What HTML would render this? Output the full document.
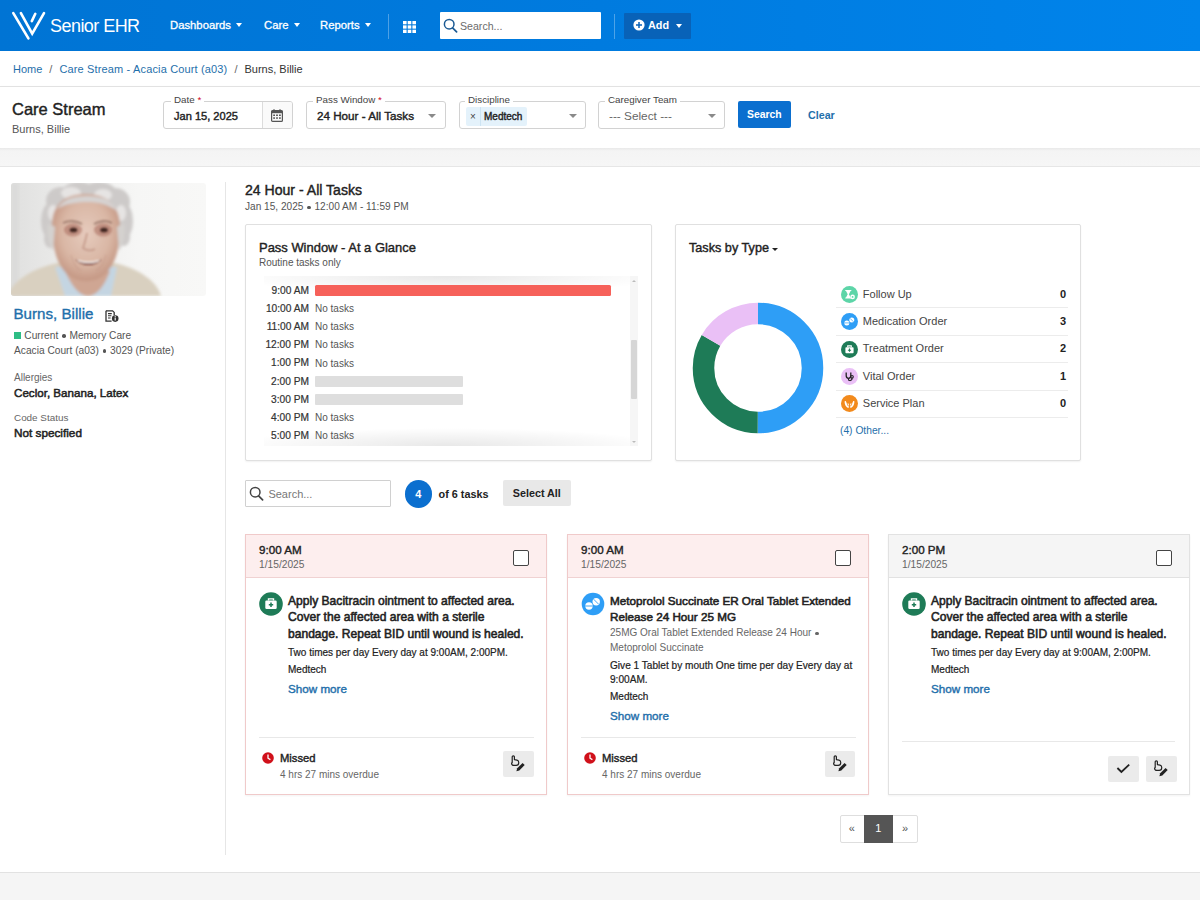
<!DOCTYPE html>
<html><head><meta charset="utf-8">
<style>
*{box-sizing:border-box;margin:0;padding:0}
html,body{width:1200px;height:900px;overflow:hidden;background:#fff;font-family:"Liberation Sans",sans-serif;color:#222}
.abs{position:absolute}
.t{position:absolute;line-height:1;white-space:nowrap}
.b{font-weight:bold}
.caret{display:inline-block;width:0;height:0;border-left:3.5px solid transparent;border-right:3.5px solid transparent;border-top:4px solid currentColor;vertical-align:middle;margin-left:5px;margin-top:-2px}
.fld{position:absolute;border:1px solid #d2d2d2;border-radius:3px;background:#fff}
.flbl{position:absolute;line-height:1;font-size:9.8px;color:#444;background:#fff;padding:0 3px;white-space:nowrap}
.req{color:#d0021b}
.tri{position:absolute;width:0;height:0;border-left:4px solid transparent;border-right:4px solid transparent;border-top:4.5px solid #8a8a8a}
.link{color:#1f6fab}
.card{position:absolute;border:1px solid #f0cccc;background:#fff;border-radius:2px}
.card .hd{position:absolute;left:0;top:0;right:0;height:44px;background:#fdeeee;border-bottom:1px solid #f0d4d4}
.chk{position:absolute;width:16px;height:16px;border:1.8px solid #444;border-radius:2px;background:#fff}
.abtn{position:absolute;width:31px;height:27px;background:#ebebeb;border-radius:2px}
.dot{display:inline-block;width:3.5px;height:3.5px;border-radius:50%;background:currentColor;vertical-align:middle;margin:0 1px}
.sb{-webkit-text-stroke:0.4px currentColor}
.sbw{-webkit-text-stroke:0.3px #fff}
</style></head><body>

<!-- HEADER -->
<div class="abs" style="left:0;top:0;width:1200px;height:51px;background:linear-gradient(90deg,#0074d4 0%,#007bdf 50%,#0084eb 100%)"></div>
<svg class="abs" style="left:11px;top:11px" width="36" height="30" viewBox="0 0 36 30">
  <g stroke="#fff" stroke-width="2.6" fill="none" stroke-linecap="round">
  <path d="M2.3 2.1 L17.4 27.4"/>
  <path d="M9.9 2.1 L21.2 22.6 L33 2.1"/>
  <path d="M20.8 10.1 L24.3 2.8"/>
  </g>
</svg>
<div class="t" style="left:50px;top:17px;color:#fff;font-size:18px;letter-spacing:-0.55px">Senior EHR</div>
<div class="t" style="left:170px;top:20px;color:#fff;font-size:11.3px;-webkit-text-stroke:0.3px #fff">Dashboards<span class="caret"></span></div>
<div class="t" style="left:264px;top:20px;color:#fff;font-size:11.3px;-webkit-text-stroke:0.3px #fff">Care<span class="caret"></span></div>
<div class="t" style="left:320px;top:20px;color:#fff;font-size:11.3px;-webkit-text-stroke:0.3px #fff">Reports<span class="caret"></span></div>
<div class="abs" style="left:388px;top:14px;width:1px;height:25px;background:rgba(255,255,255,.3)"></div>
<svg class="abs" style="left:403px;top:21px" width="13" height="12" viewBox="0 0 13 12" fill="#fff">
  <rect x="0" y="0" width="3.6" height="3.3"/><rect x="4.7" y="0" width="3.6" height="3.3"/><rect x="9.4" y="0" width="3.6" height="3.3"/>
  <rect x="0" y="4.35" width="3.6" height="3.3"/><rect x="4.7" y="4.35" width="3.6" height="3.3"/><rect x="9.4" y="4.35" width="3.6" height="3.3"/>
  <rect x="0" y="8.7" width="3.6" height="3.3"/><rect x="4.7" y="8.7" width="3.6" height="3.3"/><rect x="9.4" y="8.7" width="3.6" height="3.3"/>
</svg>
<div class="abs" style="left:440px;top:12px;width:161px;height:27px;background:#fff;border-radius:1px"></div>
<svg class="abs" style="left:443px;top:18px" width="15" height="15" viewBox="0 0 15 15"><circle cx="6.2" cy="6.2" r="4.8" stroke="#1b5a94" stroke-width="1.5" fill="none"/><path d="M9.6 9.8 L13.6 13.8" stroke="#1b5a94" stroke-width="1.7" stroke-linecap="round"/></svg>
<div class="t" style="left:460px;top:21px;font-size:10.6px;color:#6b6b6b">Search...</div>
<div class="abs" style="left:614px;top:14px;width:1px;height:25px;background:rgba(255,255,255,.3)"></div>
<div class="abs" style="left:624px;top:13px;width:67px;height:26px;background:#0862b8;border-radius:1px"></div>
<svg class="abs" style="left:633px;top:19px" width="12" height="12" viewBox="0 0 12 12"><circle cx="6" cy="6" r="5.6" fill="#fff"/><path d="M6 3V9M3 6H9" stroke="#0862b8" stroke-width="1.5"/></svg>
<div class="t" style="left:648px;top:20px;font-size:10.8px;color:#fff;font-weight:bold">Add</div>
<div class="abs" style="left:676px;top:24px;width:0;height:0;border-left:3.5px solid transparent;border-right:3.5px solid transparent;border-top:4px solid #fff"></div>

<!-- BREADCRUMB -->
<div class="t" style="left:13px;top:64px;font-size:11px;color:#333"><span class="link">Home</span><span style="margin:0 7px;color:#666">/</span><span class="link" style="letter-spacing:0.15px">Care Stream - Acacia Court (a03)</span><span style="margin:0 7px;color:#666">/</span>Burns, Billie</div>

<!-- FILTER BAR -->
<div class="abs" style="left:0;top:86px;width:1200px;height:62px;background:#fff;border-top:1px solid #e2e2e2;box-shadow:0 2px 3px rgba(0,0,0,.09)"></div>
<div class="abs" style="left:0;top:148px;width:1200px;height:19px;background:linear-gradient(#e9e9e9,#f4f4f4 3px,#f6f6f6);border-bottom:1px solid #e6e6e6"></div>

<div class="t sb" style="left:12px;top:101.1px;font-size:16.5px;color:#222">Care Stream</div>
<div class="t" style="left:12px;top:124px;font-size:11px;color:#555">Burns, Billie</div>

<div class="fld" style="left:163px;top:101px;width:130px;height:28px"></div>
<div class="abs" style="left:262px;top:102px;width:30px;height:26px;border-left:1px solid #dcdcdc;background:#fafafa;border-radius:0 2px 2px 0"></div>
<svg class="abs" style="left:271px;top:109px" width="12" height="13" viewBox="0 0 12 13"><rect x="0.6" y="1.6" width="10.8" height="10.8" rx="1" fill="none" stroke="#555" stroke-width="1.2"/><rect x="0.6" y="1.6" width="10.8" height="2.6" fill="#555"/><path d="M3 0.3V2.5M9 0.3V2.5" stroke="#555" stroke-width="1.3"/><g fill="#555"><rect x="2.2" y="5.5" width="1.8" height="1.5"/><rect x="5.1" y="5.5" width="1.8" height="1.5"/><rect x="8" y="5.5" width="1.8" height="1.5"/><rect x="2.2" y="8.3" width="1.8" height="1.5"/><rect x="5.1" y="8.3" width="1.8" height="1.5"/><rect x="8" y="8.3" width="1.8" height="1.5"/></g></svg>
<div class="flbl" style="left:171px;top:95.2px">Date <span class="req">*</span></div>
<div class="t sb" style="left:174px;top:110.6px;font-size:11.07px">Jan 15, 2025</div>

<div class="fld" style="left:306px;top:101px;width:140px;height:28px"></div>
<div class="flbl" style="left:313px;top:95.2px">Pass Window <span class="req">*</span></div>
<div class="t sb" style="left:317px;top:110.3px;font-size:11.66px">24 Hour - All Tasks</div>
<div class="tri" style="left:428px;top:113.5px"></div>

<div class="fld" style="left:459px;top:101px;width:127px;height:28px"></div>
<div class="flbl" style="left:465px;top:95.2px">Discipline</div>
<div class="abs" style="left:466px;top:107px;width:61px;height:19px;background:#e4f2fb;border-radius:2px"></div>
<div class="abs" style="left:479.5px;top:107px;width:1px;height:19px;background:#cde4f3"></div>
<div class="t" style="left:470px;top:112px;font-size:10px;color:#444">×</div>
<div class="t sb" style="left:484px;top:112px;font-size:10px">Medtech</div>
<div class="tri" style="left:569px;top:113.5px"></div>

<div class="fld" style="left:598px;top:101px;width:127px;height:28px"></div>
<div class="flbl" style="left:605px;top:95.2px">Caregiver Team</div>
<div class="t" style="left:609px;top:111px;font-size:11.8px;color:#666">--- Select ---</div>
<div class="tri" style="left:708px;top:113.5px"></div>

<div class="abs" style="left:738px;top:101px;width:53px;height:27px;background:#0b6fcf;border-radius:2px"></div>
<div class="t b" style="left:747px;top:109.5px;font-size:10.4px;color:#fff">Search</div>
<div class="t b link" style="left:808px;top:109.5px;font-size:10.7px">Clear</div>

<!-- LEFT COLUMN -->
<svg class="abs" style="left:10.5px;top:183px" width="195" height="113" viewBox="0 0 195 113">
  <defs>
    <linearGradient id="bg" x1="0" x2="1" y1="0" y2="0"><stop offset="0" stop-color="#e0e0df"/><stop offset="0.2" stop-color="#e8e8e7"/><stop offset="0.35" stop-color="#efefee"/><stop offset="0.65" stop-color="#f6f6f5"/><stop offset="1" stop-color="#f8f8f7"/></linearGradient>
    <radialGradient id="face" cx="0.5" cy="0.45" r="0.6"><stop offset="0" stop-color="#e6cbbd"/><stop offset="0.6" stop-color="#d9b6a4"/><stop offset="1" stop-color="#bf8f7b"/></radialGradient>
    <filter id="bl" x="-10%" y="-10%" width="120%" height="120%"><feGaussianBlur stdDeviation="1.8"/></filter>
    <filter id="bl2"><feGaussianBlur stdDeviation="0.8"/></filter>
    <clipPath id="pc"><rect width="195" height="113" rx="3"/></clipPath>
  </defs>
  <g clip-path="url(#pc)">
  <rect width="195" height="113" fill="url(#bg)"/>
  <rect x="0" y="0" width="8" height="113" fill="#d9d9d8" opacity="0.7" filter="url(#bl)"/>
  <g filter="url(#bl)">
    <g fill="#cdcac9"><ellipse cx="50" cy="18" rx="15" ry="14"/><ellipse cx="68" cy="9" rx="17" ry="10"/><ellipse cx="88" cy="9" rx="17" ry="10"/><ellipse cx="104" cy="19" rx="15" ry="14"/><ellipse cx="38" cy="38" rx="8" ry="17"/><ellipse cx="114" cy="38" rx="8" ry="17"/><ellipse cx="39" cy="56" rx="6" ry="9"/><ellipse cx="113" cy="54" rx="6" ry="9"/></g>
    <g fill="#e6e4e3"><ellipse cx="60" cy="10" rx="10" ry="6"/><ellipse cx="92" cy="12" rx="9" ry="6"/><ellipse cx="42" cy="30" rx="5" ry="8"/><ellipse cx="110" cy="30" rx="5" ry="8"/></g>
    <path d="M-4 113 C2 98 20 86 46 80 L104 80 C128 86 146 98 150 113Z" fill="#d9d0c0"/>
    <path d="M44 84 L54 113 L100 113 L106 84Z" fill="#c4d5e2"/>
    <path d="M54 88 C60 102 68 113 77 113 C86 113 94 102 99 88Z" fill="#cfa693"/>
    <path d="M41 42 C41 20 56 11 75 11 C95 11 109 22 109 44 C109 66 104 82 94 91 C88 96 82 98 75 98 C68 98 60 95 55 90 C46 81 41 64 41 42Z" fill="url(#face)"/>
    <path d="M46 26 C52 16 62 13 76 13 C92 13 102 18 106 28 C96 21 88 19 76 19 C64 19 54 21 46 26Z" fill="#d6d3d2"/>
    <path d="M37 40 C35 52 38 62 42 68 L44 44Z" fill="#d4d1cf"/>
    <path d="M113 40 C115 52 112 62 108 68 L106 44Z" fill="#d4d1cf"/>
  </g>
  <g filter="url(#bl2)">
    <ellipse cx="62" cy="47" rx="9" ry="6.5" fill="#a86a5c" opacity="0.55"/>
    <ellipse cx="92" cy="47" rx="9" ry="6.5" fill="#a86a5c" opacity="0.55"/>
    <path d="M52 40 C58 37 66 38 71 41" stroke="#8f6a5e" stroke-width="1.8" fill="none" opacity="0.8"/>
    <path d="M83 41 C88 38 96 37 101 40" stroke="#8f6a5e" stroke-width="1.8" fill="none" opacity="0.8"/>
    <ellipse cx="62.5" cy="47" rx="4" ry="2.5" fill="#3f2620"/>
    <ellipse cx="93" cy="47" rx="4" ry="2.5" fill="#3f2620"/>
    <path d="M76 50 C75 56 73 62 72 65 C75 68 81 68 84 66" stroke="#c09584" stroke-width="1.8" fill="none" opacity="0.8"/>
    <path d="M64 76 C71 81 84 81 91 76 C85 84 70 84 64 76Z" fill="#7e4038"/>
    <path d="M67 77.5 C73 80 82 80 88 77.5" stroke="#f3ebe7" stroke-width="1.6" fill="none"/>
    <path d="M60 72 C62 80 66 86 70 88" stroke="#c49a88" stroke-width="1.2" fill="none" opacity="0.6"/>
    <path d="M95 72 C93 80 89 86 85 88" stroke="#c49a88" stroke-width="1.2" fill="none" opacity="0.6"/>
  </g>
  </g>
</svg>

<div class="t link" style="left:13.5px;top:306.4px;font-size:15.15px;-webkit-text-stroke:0.35px #1f6fab">Burns, Billie</div>
<svg class="abs" style="left:104.5px;top:310px" width="14" height="12" viewBox="0 0 14 12"><path d="M1 0.8H7.6L9.2 2.4V5.2" stroke="#333" stroke-width="1.3" fill="none"/><path d="M1 0.8V11.2H6.6" stroke="#333" stroke-width="1.3" fill="none"/><path d="M3 3.6H6.8M3 5.8H6.4M3 8H5.6" stroke="#333" stroke-width="1.1"/><circle cx="10.2" cy="8.6" r="3.3" fill="#333"/><path d="M10.2 7.6V10.4" stroke="#fff" stroke-width="1.1"/><circle cx="10.2" cy="6.5" r="0.6" fill="#fff"/></svg>
<div class="abs" style="left:14px;top:332px;width:7px;height:7px;background:#2ebd85"></div>
<div class="t" style="left:24.3px;top:330.7px;font-size:10.2px;color:#555">Current <span class="dot"></span> Memory Care</div>
<div class="t" style="left:14px;top:345.7px;font-size:10.2px;color:#555">Acacia Court (a03) <span class="dot"></span> 3029 (Private)</div>
<div class="t" style="left:14px;top:373.4px;font-size:10px;color:#666">Allergies</div>
<div class="t" style="left:14px;top:387px;font-size:11.62px;color:#222;-webkit-text-stroke:0.5px #222">Ceclor, Banana, Latex</div>
<div class="t" style="left:14px;top:412.9px;font-size:9.9px;color:#666">Code Status</div>
<div class="t" style="left:14px;top:426.8px;font-size:11.76px;color:#222;-webkit-text-stroke:0.5px #222">Not specified</div>
<div class="abs" style="left:225px;top:182px;width:1px;height:673px;background:#e6e6e6"></div>


<!-- MAIN -->
<div class="t sb" style="left:245px;top:183.1px;font-size:14.07px;color:#222">24 Hour - All Tasks</div>
<div class="t" style="left:245px;top:202px;font-size:10.1px;color:#555">Jan 15, 2025 <span class="dot"></span> 12:00 AM - 11:59 PM</div>
<div class="abs" style="left:245px;top:224px;width:407px;height:237px;border:1px solid #e0e0e0;border-radius:2px;box-shadow:0 1px 2px rgba(0,0,0,.06);background:#fff"></div>
<div class="t sb" style="left:259px;top:242.4px;font-size:12.96px;color:#222">Pass Window - At a Glance</div>
<div class="t" style="left:259px;top:258.3px;font-size:10px;color:#555">Routine tasks only</div>
<div class="abs" style="left:264px;top:276px;width:374px;height:170px;background:#fff;overflow:hidden">
<div class="abs" style="left:0;top:0;width:366px;height:18px;background:radial-gradient(ellipse 60% 100% at 50% 0%,rgba(0,0,0,.09),rgba(0,0,0,0) 100%)"></div>
<div class="abs" style="left:0;top:152px;width:366px;height:18px;background:radial-gradient(ellipse 60% 100% at 50% 100%,rgba(0,0,0,.09),rgba(0,0,0,0) 100%)"></div>
</div>
<div class="abs" style="left:630px;top:276px;width:8px;height:170px;background:#f6f6f6"></div>
<div class="abs" style="left:631px;top:340px;width:6px;height:59px;background:#d6d6d6;border-radius:1px"></div>
<div class="abs" style="left:632px;top:280px;width:0;height:0;border-left:2px solid transparent;border-right:2px solid transparent;border-bottom:2px solid #bbb"></div>
<div class="abs" style="left:632px;top:441px;width:0;height:0;border-left:2px solid transparent;border-right:2px solid transparent;border-top:2px solid #bbb"></div>
<div class="t" style="left:209px;width:100px;text-align:right;top:285.8px;font-size:10.2px;color:#333;-webkit-text-stroke:0.2px #333">9:00 AM</div>
<div class="abs" style="left:315px;top:285.2px;width:296px;height:11px;background:#f6615a;border-radius:1.5px"></div>
<div class="t" style="left:209px;width:100px;text-align:right;top:304.0px;font-size:10.2px;color:#333;-webkit-text-stroke:0.2px #333">10:00 AM</div>
<div class="t" style="left:315px;top:304.1px;font-size:10px;color:#555">No tasks</div>
<div class="t" style="left:209px;width:100px;text-align:right;top:322.1px;font-size:10.2px;color:#333;-webkit-text-stroke:0.2px #333">11:00 AM</div>
<div class="t" style="left:315px;top:322.2px;font-size:10px;color:#555">No tasks</div>
<div class="t" style="left:209px;width:100px;text-align:right;top:340.3px;font-size:10.2px;color:#333;-webkit-text-stroke:0.2px #333">12:00 PM</div>
<div class="t" style="left:315px;top:340.4px;font-size:10px;color:#555">No tasks</div>
<div class="t" style="left:209px;width:100px;text-align:right;top:358.4px;font-size:10.2px;color:#333;-webkit-text-stroke:0.2px #333">1:00 PM</div>
<div class="t" style="left:315px;top:358.5px;font-size:10px;color:#555">No tasks</div>
<div class="t" style="left:209px;width:100px;text-align:right;top:376.6px;font-size:10.2px;color:#333;-webkit-text-stroke:0.2px #333">2:00 PM</div>
<div class="abs" style="left:315px;top:375.9px;width:148px;height:11px;background:#dedede;border-radius:1px"></div>
<div class="t" style="left:209px;width:100px;text-align:right;top:394.7px;font-size:10.2px;color:#333;-webkit-text-stroke:0.2px #333">3:00 PM</div>
<div class="abs" style="left:315px;top:394.1px;width:148px;height:11px;background:#dedede;border-radius:1px"></div>
<div class="t" style="left:209px;width:100px;text-align:right;top:412.9px;font-size:10.2px;color:#333;-webkit-text-stroke:0.2px #333">4:00 PM</div>
<div class="t" style="left:315px;top:413.0px;font-size:10px;color:#555">No tasks</div>
<div class="t" style="left:209px;width:100px;text-align:right;top:431.0px;font-size:10.2px;color:#333;-webkit-text-stroke:0.2px #333">5:00 PM</div>
<div class="t" style="left:315px;top:431.1px;font-size:10px;color:#555">No tasks</div>
<div class="abs" style="left:675px;top:224px;width:406px;height:237px;border:1px solid #e0e0e0;border-radius:2px;box-shadow:0 1px 2px rgba(0,0,0,.06);background:#fff"></div>
<div class="t sb" style="left:689px;top:241.9px;font-size:12.66px;color:#222">Tasks by Type<span class="caret" style="margin-left:3px;border-left-width:3.5px;border-right-width:3.5px;border-top-width:3.5px;margin-top:1px"></span></div>
<svg class="abs" style="left:688px;top:298px" width="140" height="140" viewBox="0 0 140 140">
<g transform="rotate(-90 70 70)">
<circle cx="70" cy="70" r="54.5" fill="none" stroke="#2e9ef6" stroke-width="21.5" stroke-dasharray="171.22 342.43" stroke-dashoffset="0"/>
<circle cx="70" cy="70" r="54.5" fill="none" stroke="#1e7b57" stroke-width="21.5" stroke-dasharray="114.14 342.43" stroke-dashoffset="-171.22"/>
<circle cx="70" cy="70" r="54.5" fill="none" stroke="#eac0f6" stroke-width="21.5" stroke-dasharray="57.07 342.43" stroke-dashoffset="-285.36"/>
</g></svg>
<svg class="abs" style="left:840.5px;top:285.8px" width="17" height="17" viewBox="0 0 17 17"><circle cx="8.5" cy="8.5" r="8.5" fill="#5dd5a8"/><path d="M4.3 4H10.3V5H9.6L7.9 8.3L9.6 11.6H10.3V12.6H4.3V11.6H5L6.7 8.3L5 5H4.3Z" fill="#fff"/><circle cx="11.6" cy="10.9" r="2.3" fill="#fff"/><circle cx="11.6" cy="10.9" r="0.9" fill="#5dd5a8"/></svg>
<div class="t" style="left:862.8px;top:288.5px;font-size:11px;color:#444">Follow Up</div>
<div class="t b" style="left:966px;width:100px;text-align:right;top:288.5px;font-size:11px;color:#222">0</div>
<div class="abs" style="left:836px;top:307.4px;width:232px;height:1px;background:#ececec"></div>
<svg class="abs" style="left:840.5px;top:313.2px" width="17" height="17" viewBox="0 0 17 17"><circle cx="8.5" cy="8.5" r="8.5" fill="#2e9ef6"/><circle cx="5.8" cy="9.9" r="2.5" fill="#fff"/><path d="M3.3 9.9H8.3" stroke="#2e9ef6" stroke-width="0.7"/><circle cx="10.8" cy="7.1" r="2.5" fill="#fff"/><path d="M9 5.3L12.6 8.9" stroke="#2e9ef6" stroke-width="0.7"/></svg>
<div class="t" style="left:862.8px;top:315.9px;font-size:11px;color:#444">Medication Order</div>
<div class="t b" style="left:966px;width:100px;text-align:right;top:315.9px;font-size:11px;color:#222">3</div>
<div class="abs" style="left:836px;top:334.8px;width:232px;height:1px;background:#ececec"></div>
<svg class="abs" style="left:840.5px;top:340.6px" width="17" height="17" viewBox="0 0 17 17"><circle cx="8.5" cy="8.5" r="8.5" fill="#1e7b57"/><rect x="4.4" y="6.2" width="8.2" height="6" rx="0.9" fill="#fff"/><path d="M6.7 6.2V4.9H10.3V6.2" stroke="#fff" stroke-width="1.1" fill="none"/><path d="M8.5 7.6V10.8M6.9 9.2H10.1" stroke="#1e7b57" stroke-width="1.1"/></svg>
<div class="t" style="left:862.8px;top:343.3px;font-size:11px;color:#444">Treatment Order</div>
<div class="t b" style="left:966px;width:100px;text-align:right;top:343.3px;font-size:11px;color:#222">2</div>
<div class="abs" style="left:836px;top:362.2px;width:232px;height:1px;background:#ececec"></div>
<svg class="abs" style="left:840.5px;top:368.0px" width="17" height="17" viewBox="0 0 17 17"><circle cx="8.5" cy="8.5" r="8.5" fill="#eac0f6"/><path d="M5.2 4.6V7.6C5.2 9.4 6.3 10.4 7.5 10.4C8.7 10.4 9.8 9.4 9.8 7.6V4.6" stroke="#222" stroke-width="1.3" fill="none"/><path d="M7.5 10.4V11.4C7.5 12.8 9.8 13 10.9 11.4V10" stroke="#222" stroke-width="1.2" fill="none"/><circle cx="11" cy="8.8" r="1.3" fill="none" stroke="#222" stroke-width="1.1"/></svg>
<div class="t" style="left:862.8px;top:370.7px;font-size:11px;color:#444">Vital Order</div>
<div class="t b" style="left:966px;width:100px;text-align:right;top:370.7px;font-size:11px;color:#222">1</div>
<div class="abs" style="left:836px;top:389.6px;width:232px;height:1px;background:#ececec"></div>
<svg class="abs" style="left:840.5px;top:395.4px" width="17" height="17" viewBox="0 0 17 17"><circle cx="8.5" cy="8.5" r="8.5" fill="#f28a1c"/><path d="M3.6 6.2C3.6 9.8 5 12.6 7.8 12.8V11.2C6.6 10.8 5.8 9.8 5.8 8.4L4.8 6Z" fill="#fff"/><path d="M13.4 6.2C13.4 9.8 12 12.6 9.2 12.8V11.2C10.4 10.8 11.2 9.8 11.2 8.4L12.2 6Z" fill="#fff"/><path d="M6.6 8.8C6.6 10 7.2 10.6 7.8 10.8V9.2L7 8Z M10.4 8.8C10.4 10 9.8 10.6 9.2 10.8V9.2L10 8Z" fill="#fff"/></svg>
<div class="t" style="left:862.8px;top:398.1px;font-size:11px;color:#444">Service Plan</div>
<div class="t b" style="left:966px;width:100px;text-align:right;top:398.1px;font-size:11px;color:#222">0</div>
<div class="abs" style="left:836px;top:417.0px;width:232px;height:1px;background:#ececec"></div>
<div class="t link" style="left:840px;top:426.0px;font-size:10.25px">(4) Other...</div>
<div class="abs" style="left:245px;top:480px;width:146px;height:27px;border:1px solid #d0d0d0;border-radius:1px"></div>
<svg class="abs" style="left:249px;top:486px" width="15" height="15" viewBox="0 0 15 15"><circle cx="6.2" cy="6.2" r="4.8" stroke="#444" stroke-width="1.5" fill="none"/><path d="M9.6 9.8 L13.6 13.8" stroke="#444" stroke-width="1.7" stroke-linecap="round"/></svg>
<div class="t" style="left:268.4px;top:488.6px;font-size:11px;color:#777">Search...</div>
<div class="abs" style="left:404.5px;top:480.2px;width:27.5px;height:27.5px;border-radius:50%;background:#0b6fcf"></div>
<div class="t b" style="left:404.5px;width:27.5px;text-align:center;top:488.6px;font-size:11px;color:#fff">4</div>
<div class="t b" style="left:438.6px;top:488.7px;font-size:10.84px;color:#222">of 6 tasks</div>
<div class="abs" style="left:503px;top:480.4px;width:67.5px;height:25.5px;background:#e8e8e8;border-radius:2px"></div>
<div class="t b" style="left:512.8px;top:487.9px;font-size:10.75px;color:#222">Select All</div>

<!-- CARDS -->
<div class="abs" style="left:245px;top:534px;width:302px;height:261px;border:1px solid #f0caca;background:#fff;box-shadow:0 1px 2px rgba(0,0,0,.05)"></div>
<div class="abs" style="left:246px;top:535px;width:300px;height:43px;background:#fdeeee;border-bottom:1px solid #f0d2d2"></div>
<div class="t sb" style="left:259px;top:543.5px;font-size:11.61px;color:#222">9:00 AM</div>
<div class="t" style="left:259px;top:559.0px;font-size:10.23px;color:#666;margin-top:1px">1/15/2025</div>
<div class="chk" style="left:513px;top:550px"></div>
<svg class="abs" style="left:258.5px;top:591.5px" width="24" height="24" viewBox="0 0 24 24"><circle cx="12" cy="12" r="11.8" fill="#1e7b57"/><rect x="6.3" y="8.6" width="11.4" height="8.4" rx="1.2" fill="#fff"/><path d="M9.5 8.6V6.9H14.5V8.6" stroke="#fff" stroke-width="1.4" fill="none"/><path d="M12 10.6V15M9.8 12.8H14.2" stroke="#1e7b57" stroke-width="1.5"/></svg>
<div class="abs b" style="left:288px;top:592.75px;width:260px;font-size:12.09px;line-height:16.5px;color:#222;font-weight:normal;-webkit-text-stroke:0.55px #222">Apply Bacitracin ointment to affected area.<br>Cover the affected area with a sterile<br>bandage. Repeat BID until wound is healed.</div>
<div class="t" style="left:288px;top:647.5px;font-size:10.02px;color:#222;-webkit-text-stroke:0.2px #222">Two times per day Every day at 9:00AM, 2:00PM.</div>
<div class="t" style="left:288px;top:664.9px;font-size:10px;color:#222;-webkit-text-stroke:0.2px #222">Medtech</div>
<div class="t sb link" style="left:288px;top:683.3px;font-size:11.67px">Show more</div>
<div class="abs" style="left:258.5px;top:737px;width:275px;height:1px;background:#e8e8e8"></div>
<svg class="abs" style="left:261.5px;top:752px" width="12" height="12" viewBox="0 0 12 12"><circle cx="6" cy="6" r="5.8" fill="#d0101a"/><path d="M6 2.6V6.2L8.4 7.6" stroke="#fff" stroke-width="1.3" fill="none"/></svg>
<div class="t sb" style="left:280px;top:752.5px;font-size:11.24px;color:#222">Missed</div>
<div class="t" style="left:280px;top:769.6px;font-size:10px;color:#666">4 hrs 27 mins overdue</div>
<div class="abtn" style="left:503px;top:750.5px;width:30.5px;height:26.5px"></div>
<svg class="abs" style="left:503.0px;top:750.5px" width="30" height="27" viewBox="0 0 30 27"><path d="M9.2 11.5V5.8C9.2 4.6 11.4 4.6 11.4 5.8V8.6L14 9.1C15.2 9.4 15.7 10.1 15.7 11.2V12C15.7 13.6 14.6 14.4 13.2 14.4H11C9.6 14.4 8.6 13.6 8.6 12.2Z" stroke="#222" stroke-width="1.2" fill="none" stroke-linejoin="round"/><path d="M13.4 20.3L14.2 17.3L19.6 11.9L21.7 14L16.3 19.4Z" fill="#222"/></svg>
<div class="abs" style="left:567px;top:534px;width:302px;height:261px;border:1px solid #f0caca;background:#fff;box-shadow:0 1px 2px rgba(0,0,0,.05)"></div>
<div class="abs" style="left:568px;top:535px;width:300px;height:43px;background:#fdeeee;border-bottom:1px solid #f0d2d2"></div>
<div class="t sb" style="left:581px;top:543.5px;font-size:11.61px;color:#222">9:00 AM</div>
<div class="t" style="left:581px;top:559.0px;font-size:10.23px;color:#666;margin-top:1px">1/15/2025</div>
<div class="chk" style="left:835px;top:550px"></div>
<svg class="abs" style="left:580.5px;top:591.5px" width="24" height="24" viewBox="0 0 24 24"><circle cx="12" cy="12" r="11.3" fill="#2e9ef6"/><circle cx="8" cy="14" r="3.7" fill="#fff"/><path d="M4.3 14H11.7" stroke="#2e9ef6" stroke-width="0.9"/><circle cx="15.2" cy="9.8" r="3.7" fill="#fff"/><path d="M12.6 7.2L17.8 12.4" stroke="#2e9ef6" stroke-width="0.9"/></svg>
<div class="abs b" style="left:610px;top:592.75px;width:260px;font-size:11.7px;line-height:16.6px;color:#222;font-weight:normal;-webkit-text-stroke:0.55px #222">Metoprolol Succinate ER Oral Tablet Extended<br>Release 24 Hour 25 MG</div>
<div class="abs" style="left:610px;top:626.4px;width:250px;font-size:10.03px;line-height:14.4px;color:#666">25MG Oral Tablet Extended Release 24 Hour <span class="dot"></span><br>Metoprolol Succinate</div>
<div class="abs" style="left:610px;top:659px;width:250px;font-size:10.11px;line-height:14px;color:#222;-webkit-text-stroke:0.2px #222">Give 1 Tablet by mouth One time per day Every day at<br>9:00AM.</div>
<div class="t" style="left:610px;top:691.6px;font-size:10px;color:#222;-webkit-text-stroke:0.2px #222">Medtech</div>
<div class="t sb link" style="left:610px;top:710.3px;font-size:11.67px">Show more</div>
<div class="abs" style="left:580.5px;top:737px;width:275px;height:1px;background:#e8e8e8"></div>
<svg class="abs" style="left:583.5px;top:752px" width="12" height="12" viewBox="0 0 12 12"><circle cx="6" cy="6" r="5.8" fill="#d0101a"/><path d="M6 2.6V6.2L8.4 7.6" stroke="#fff" stroke-width="1.3" fill="none"/></svg>
<div class="t sb" style="left:602px;top:752.5px;font-size:11.24px;color:#222">Missed</div>
<div class="t" style="left:602px;top:769.6px;font-size:10px;color:#666">4 hrs 27 mins overdue</div>
<div class="abtn" style="left:824.5px;top:750.5px;width:30.5px;height:26.5px"></div>
<svg class="abs" style="left:824.5px;top:750.5px" width="30" height="27" viewBox="0 0 30 27"><path d="M9.2 11.5V5.8C9.2 4.6 11.4 4.6 11.4 5.8V8.6L14 9.1C15.2 9.4 15.7 10.1 15.7 11.2V12C15.7 13.6 14.6 14.4 13.2 14.4H11C9.6 14.4 8.6 13.6 8.6 12.2Z" stroke="#222" stroke-width="1.2" fill="none" stroke-linejoin="round"/><path d="M13.4 20.3L14.2 17.3L19.6 11.9L21.7 14L16.3 19.4Z" fill="#222"/></svg>
<div class="abs" style="left:888px;top:534px;width:302px;height:261px;border:1px solid #e2e2e2;background:#fff;box-shadow:0 1px 2px rgba(0,0,0,.05)"></div>
<div class="abs" style="left:889px;top:535px;width:300px;height:43px;background:#f5f5f5;border-bottom:1px solid #e2e2e2"></div>
<div class="t sb" style="left:902px;top:543.5px;font-size:11.61px;color:#222">2:00 PM</div>
<div class="t" style="left:902px;top:559.0px;font-size:10.23px;color:#666;margin-top:1px">1/15/2025</div>
<div class="chk" style="left:1156px;top:550px"></div>
<svg class="abs" style="left:901.5px;top:591.5px" width="24" height="24" viewBox="0 0 24 24"><circle cx="12" cy="12" r="11.8" fill="#1e7b57"/><rect x="6.3" y="8.6" width="11.4" height="8.4" rx="1.2" fill="#fff"/><path d="M9.5 8.6V6.9H14.5V8.6" stroke="#fff" stroke-width="1.4" fill="none"/><path d="M12 10.6V15M9.8 12.8H14.2" stroke="#1e7b57" stroke-width="1.5"/></svg>
<div class="abs b" style="left:931px;top:592.75px;width:260px;font-size:12.09px;line-height:16.5px;color:#222;font-weight:normal;-webkit-text-stroke:0.55px #222">Apply Bacitracin ointment to affected area.<br>Cover the affected area with a sterile<br>bandage. Repeat BID until wound is healed.</div>
<div class="t" style="left:931px;top:647.5px;font-size:10.02px;color:#222;-webkit-text-stroke:0.2px #222">Two times per day Every day at 9:00AM, 2:00PM.</div>
<div class="t" style="left:931px;top:664.9px;font-size:10px;color:#222;-webkit-text-stroke:0.2px #222">Medtech</div>
<div class="t sb link" style="left:931px;top:683.3px;font-size:11.67px">Show more</div>
<div class="abs" style="left:901.5px;top:741px;width:273px;height:1px;background:#e8e8e8"></div>
<div class="abtn" style="left:1108px;top:755.5px;width:30.5px;height:26.5px"></div>
<svg class="abs" style="left:1108.0px;top:755.5px" width="30" height="27" viewBox="0 0 30 27"><path d="M9.4 12L13.4 16L21.2 8.6" stroke="#222" stroke-width="1.8" fill="none"/></svg>
<div class="abtn" style="left:1146px;top:755.5px;width:30.5px;height:26.5px"></div>
<svg class="abs" style="left:1146.0px;top:755.5px" width="30" height="27" viewBox="0 0 30 27"><path d="M9.2 11.5V5.8C9.2 4.6 11.4 4.6 11.4 5.8V8.6L14 9.1C15.2 9.4 15.7 10.1 15.7 11.2V12C15.7 13.6 14.6 14.4 13.2 14.4H11C9.6 14.4 8.6 13.6 8.6 12.2Z" stroke="#222" stroke-width="1.2" fill="none" stroke-linejoin="round"/><path d="M13.4 20.3L14.2 17.3L19.6 11.9L21.7 14L16.3 19.4Z" fill="#222"/></svg>
<div class="abs" style="left:839.5px;top:814.5px;width:78px;height:28px;border:1px solid #dedede;border-radius:2px;background:#fff"></div>
<div class="abs" style="left:864px;top:814.5px;width:28.5px;height:28px;background:#555"></div>
<div class="t" style="left:839.5px;width:24.5px;text-align:center;top:822.5px;font-size:11px;color:#555">«</div>
<div class="t" style="left:864px;width:28.5px;text-align:center;top:823.1px;font-size:11px;color:#fff">1</div>
<div class="t" style="left:892.5px;width:25px;text-align:center;top:822.5px;font-size:11px;color:#555">»</div>

<div class="abs" style="left:0;top:872px;width:1200px;height:28px;background:#f5f5f5;border-top:1px solid #e2e2e2"></div>
</body></html>
